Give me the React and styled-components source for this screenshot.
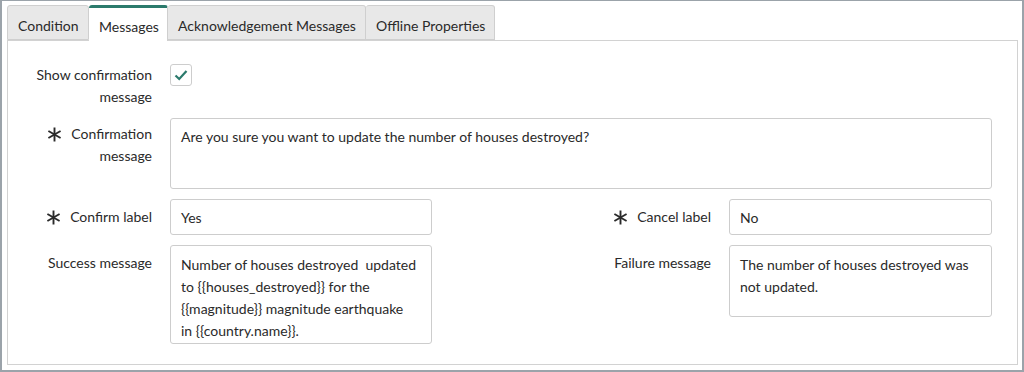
import React from "react";
import styled, { createGlobalStyle } from "styled-components";

const GlobalStyle = createGlobalStyle`
  html, body { margin: 0; padding: 0; background: #fff; }
  body {
    font-family: Lato, "Open Sans", sans-serif;
    font-size: 14px;
    color: #2a2a2a;
  }
`;

const Frame = styled.div`
  box-sizing: border-box;
  width: 1024px;
  height: 372px;
  border: 2px solid #9ba3aa;
  border-top-width: 1px;
  padding: 4px 4px 5px 5px;
  display: flex;
  flex-direction: column;
  background: #fff;
`;

const TabBar = styled.div`
  display: flex;
  align-items: flex-end;
  height: 35px;
`;

const Tab = styled.div`
  box-sizing: border-box;
  height: ${(p) => (p.active ? "36px" : "35px")};
  margin-bottom: ${(p) => (p.active ? "-1px" : "0")};
  width: ${(p) => p.width}px;
  padding-left: 10px;
  padding-top: ${(p) => (p.active ? "3px" : "5px")};
  display: flex;
  align-items: center;
  background: ${(p) => (p.active ? "#fff" : "#e8e8e8")};
  border: 1px solid #cfcfcf;
  border-left-width: ${(p) => (p.first ? "1px" : "0")};
  border-bottom: ${(p) => (p.active ? "none" : "1px solid #cfcfcf")};
  border-top: ${(p) => (p.active ? "3px solid #2b7a6c" : "1px solid #cfcfcf")};
  border-radius: 3px 3px 0 0;
  color: #2a2a2a;
  white-space: nowrap;
  position: relative;
  z-index: 1;
`;

const Panel = styled.div`
  flex: 1;
  box-sizing: border-box;
  border: 1px solid #d2d2d2;
  padding: 23px 25px 0 12px;
`;

const Form = styled.div`
  display: grid;
  grid-template-columns: 132px 262px 261px 263px;
  column-gap: 18px;
  row-gap: 10px;
`;

const Label = styled.div`
  grid-column: ${(p) => p.col || 1};
  text-align: right;
  line-height: 22px;
  padding-top: ${(p) => p.top || 0}px;
  color: #2a2a2a;
`;

const LabelLine = styled.div`
  display: flex;
  justify-content: flex-end;
  align-items: center;
  gap: 9px;
`;

const Field = styled.div`
  grid-column: ${(p) => p.span || "auto"};
  box-sizing: border-box;
  height: ${(p) => p.h}px;
  border: 1px solid #cdcdcd;
  border-radius: 3px;
  padding: ${(p) => p.pad || 7}px 10px 0 10px;
  line-height: 22px;
  white-space: pre;
  color: #2a2a2a;
  align-self: start;
`;

const CheckCell = styled.div`
  grid-column: 2 / 5;
`;

const Checkbox = styled.div`
  box-sizing: border-box;
  width: 22px;
  height: 22px;
  border: 1px solid #cdcdcd;
  border-radius: 3px;
  display: flex;
  align-items: center;
  justify-content: center;
`;

const Required = () => (
  <svg width="15" height="15" viewBox="0 0 15 15">
    <g stroke="#2a2a2a" strokeWidth="1.9" strokeLinecap="butt">
      <line x1="7.5" y1="0.5" x2="7.5" y2="14.5" />
      <line x1="1.4" y1="4" x2="13.6" y2="11" />
      <line x1="1.4" y1="11" x2="13.6" y2="4" />
    </g>
  </svg>
);

const Check = () => (
  <svg width="14" height="12" viewBox="0 0 14 12">
    <path d="M1.5 6.5 L5.2 10 L12.5 2" fill="none" stroke="#2b7a6c" strokeWidth="2.2" />
  </svg>
);

export default function App() {
  return (
    <>
      <GlobalStyle />
      <Frame>
        <TabBar>
          <Tab first width={82}>Condition</Tab>
          <Tab active width={79}>Messages</Tab>
          <Tab width={198}>Acknowledgement Messages</Tab>
          <Tab width={129}>Offline Properties</Tab>
        </TabBar>
        <Panel>
          <Form>
            <Label>
              <LabelLine>Show confirmation</LabelLine>
              <LabelLine>message</LabelLine>
            </Label>
            <CheckCell>
              <Checkbox><Check /></Checkbox>
            </CheckCell>

            <Label top={5}>
              <LabelLine><Required />Confirmation</LabelLine>
              <LabelLine>message</LabelLine>
            </Label>
            <Field span="2 / 5" h={71}>Are you sure you want to update the number of houses destroyed?</Field>

            <Label top={7}>
              <LabelLine><Required />Confirm label</LabelLine>
            </Label>
            <Field h={36}>Yes</Field>
            <Label col={3} top={7}>
              <LabelLine><Required />Cancel label</LabelLine>
            </Label>
            <Field h={36}>No</Field>

            <Label top={7}>
              <LabelLine>Success message</LabelLine>
            </Label>
            <Field h={99} pad={8}>
              {"Number of houses destroyed  updated\nto {{houses_destroyed}} for the\n{{magnitude}} magnitude earthquake\nin {{country.name}}."}
            </Field>
            <Label col={3} top={7}>
              <LabelLine>Failure message</LabelLine>
            </Label>
            <Field h={72} pad={8}>
              {"The number of houses destroyed was\nnot updated."}
            </Field>
          </Form>
        </Panel>
      </Frame>
    </>
  );
}
